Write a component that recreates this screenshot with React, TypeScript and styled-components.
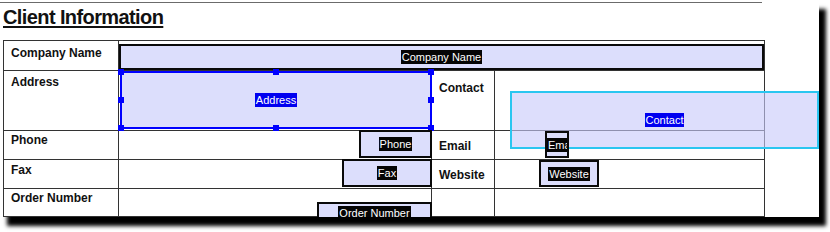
import styled, { createGlobalStyle } from "styled-components";

const GlobalStyle = createGlobalStyle`
  * {
    box-sizing: border-box;
  }

  body {
    margin: 0;
    background: #ffffff;
    font-family: "Liberation Sans", Arial, sans-serif;
  }
`;

type Handle = { $h: "left" | "mid" | "right"; $v: "top" | "mid" | "bottom" };

const handles: Handle[] = [
  { $h: "left", $v: "top" },
  { $h: "mid", $v: "top" },
  { $h: "right", $v: "top" },
  { $h: "left", $v: "mid" },
  { $h: "right", $v: "mid" },
  { $h: "left", $v: "bottom" },
  { $h: "mid", $v: "bottom" },
  { $h: "right", $v: "bottom" },
];

const App = () => {
  return (
    <>
      <GlobalStyle />
      <Frame>
        <Page>
          <TitleBar>
            <Title>Client Information</Title>
          </TitleBar>

          <FormTable>
            <Label>Company Name</Label>
            <Cell $span={3} />

            <Label $pt={4}>Address</Label>
            <Cell />
            <Label $pt={10}>Contact</Label>
            <Cell />

            <Label $pt={2}>Phone</Label>
            <Cell />
            <Label $pt={8}>Email</Label>
            <Cell />

            <Label $pt={3}>Fax</Label>
            <Cell />
            <Label $pt={8}>Website</Label>
            <Cell />

            <Label $pt={2}>Order Number</Label>
            <Cell />
            <Cell />
            <Cell />
          </FormTable>

          <Field $x={119} $y={44} $w={645} $h={26}>
            <Badge>Company Name</Badge>
          </Field>

          <Field $x={120} $y={71} $w={312} $h={58} $edge="#0000ff">
            <Badge $bg="#0000f0">Address</Badge>
            {handles.map((p) => (
              <Grip key={p.$h + p.$v} $h={p.$h} $v={p.$v} />
            ))}
          </Field>

          <Field
            $x={510}
            $y={91}
            $w={309}
            $h={58}
            $edge="#2ac6f0"
            $fill="rgba(200, 202, 250, 0.62)"
          >
            <Badge $bg="#0000f0">Contact</Badge>
          </Field>

          <Field $x={359} $y={130} $w={73} $h={28}>
            <Badge>Phone</Badge>
          </Field>

          <Field $x={545} $y={131} $w={24} $h={27} $clip>
            <Badge>Email</Badge>
          </Field>

          <Field $x={342} $y={159} $w={90} $h={28}>
            <Badge>Fax</Badge>
          </Field>

          <Field $x={539} $y={160} $w={60} $h={27}>
            <Badge>Website</Badge>
          </Field>

          <Field $x={317} $y={202} $w={115} $h={22}>
            <Badge>Order Number</Badge>
          </Field>
        </Page>
      </Frame>
    </>
  );
};

export default App;

const Frame = styled.div`
  width: 830px;
  height: 232px;
  background-color: #ffffff;
`;

const Page = styled.div`
  position: relative;

  width: 819px;
  height: 217px;
  padding-top: 2px;

  overflow: hidden;
  background-color: #ffffff;
  box-shadow: 7px 9px 4px #000000;
`;

const TitleBar = styled.div`
  width: 762px;
  height: 38px;
  padding: 2px 0 0 3px;

  border-top: 1px solid #6b6b6b;
`;

const Title = styled.span`
  font-size: 20px;
  line-height: 24px;
  font-weight: 700;
  letter-spacing: -0.6px;
  color: #111111;

  text-decoration: underline;
  text-decoration-thickness: 2px;
  text-underline-offset: 2px;
`;

const FormTable = styled.div`
  display: grid;
  grid-template-columns: 114px 312px 62px 269px;
  grid-template-rows: 29px 59px 28px 28px 27px;
  gap: 1px;

  width: max-content;
  margin-left: 3px;

  background-color: #333333;
  border: 1px solid #333333;
`;

const Cell = styled.div<{ $span?: number }>`
  grid-column: span ${({ $span }) => $span ?? 1};
  background-color: #ffffff;
`;

const Label = styled.div<{ $pt?: number }>`
  padding: ${({ $pt }) => $pt ?? 5}px 0 0 7px;

  background-color: #ffffff;
  color: #111111;
  font-size: 12px;
  line-height: 14px;
  font-weight: 700;
  white-space: nowrap;
`;

const Field = styled.div<{
  $x: number;
  $y: number;
  $w: number;
  $h: number;
  $edge?: string;
  $fill?: string;
  $clip?: boolean;
}>`
  position: absolute;
  left: ${({ $x }) => $x}px;
  top: ${({ $y }) => $y}px;
  width: ${({ $w }) => $w}px;
  height: ${({ $h }) => $h}px;

  display: flex;
  justify-content: safe center;
  align-items: center;
  overflow: ${({ $clip }) => ($clip ? "hidden" : "visible")};

  border: 2px solid ${({ $edge }) => $edge ?? "#0a0a0a"};
  background-color: ${({ $fill }) => $fill ?? "#dcdefc"};
`;

const Badge = styled.span<{ $bg?: string }>`
  flex-shrink: 0;
  padding: 0 1px;

  background-color: ${({ $bg }) => $bg ?? "#050505"};
  color: #ffffff;
  font-size: 11px;
  line-height: 14px;
  white-space: nowrap;
`;

const Grip = styled.span<Handle>`
  position: absolute;
  width: 6px;
  height: 6px;

  left: ${({ $h }) =>
    $h === "left" ? "-4px" : $h === "mid" ? "calc(50% - 3px)" : "auto"};
  right: ${({ $h }) => ($h === "right" ? "-4px" : "auto")};
  top: ${({ $v }) =>
    $v === "top" ? "-4px" : $v === "mid" ? "calc(50% - 3px)" : "auto"};
  bottom: ${({ $v }) => ($v === "bottom" ? "-4px" : "auto")};

  background-color: #0000ff;
`;
